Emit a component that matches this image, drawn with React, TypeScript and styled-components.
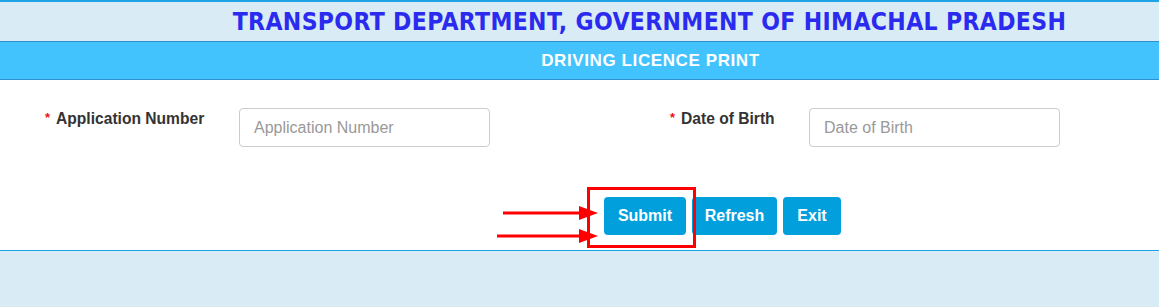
import React from "react";
import styled, { createGlobalStyle } from "styled-components";

const GlobalStyle = createGlobalStyle`
    html, body {
        margin: 0;
        padding: 0;
        background-color: #d9ecf6;
        font-family: "Liberation Sans", Arial, sans-serif;
    }
`;

const PageWrapper = styled.div`
    width: 1159px;
    min-height: 307px;
    background-color: #d9ecf6;
    border-top: 2px solid #1ea3e4;
`;

const Header = styled.div`
    height: 39px;
    display: flex;
    align-items: center;
    justify-content: center;
    padding-left: 140px;
    box-sizing: border-box;
`;

const HeaderTitle = styled.h1`
    margin: 0;
    font-family: "DejaVu Sans Condensed", "DejaVu Sans", sans-serif;
    font-weight: bold;
    font-size: 24.5px;
    letter-spacing: 0.35px;
    color: #2b2bf0;
`;

const TitleBar = styled.div`
    height: 37px;
    background-color: #42c3fe;
    border-top: 1px solid #2e90cf;
    border-bottom: 1px solid #2e90cf;
    display: flex;
    align-items: center;
    justify-content: center;
    padding-left: 142px;
    color: white;
    font-weight: bold;
    font-size: 17px;
    letter-spacing: 0.6px;
`;

const FormBlock = styled.div`
    background-color: white;
    height: 170px;
    border-bottom: 1px solid #1ea3e4;
    position: relative;
`;

const FieldRow = styled.div`
    display: grid;
    grid-template-columns: 194px 251px 180px 139px 251px;
    padding: 28px 0 0 45px;
    align-items: start;
`;

const Label = styled.label`
    font-weight: bold;
    font-size: 15.6px;
    color: #333;
    padding-top: 2px;
`;

const Star = styled.span`
    color: #f01010;
    font-size: 13px;
    margin-right: 6px;
    vertical-align: 2px;
`;

const TextInput = styled.input`
    box-sizing: border-box;
    width: 251px;
    height: 39px;
    border: 1px solid #ccc;
    border-radius: 4px;
    padding: 0 14px;
    font-family: "Liberation Sans", Arial, sans-serif;
    font-size: 16px;
    color: #555;
    &::placeholder {
        color: #999;
    }
`;

const Spacer = styled.div``;

const ButtonRow = styled.div`
    display: flex;
    gap: 6px;
    padding: 50px 0 0 604px;
`;

const Button = styled.button<{ $width: number }>`
    width: ${(p) => p.$width}px;
    height: 38px;
    border: none;
    border-radius: 4px;
    background-color: #019fdc;
    color: white;
    font-family: "Liberation Sans", Arial, sans-serif;
    font-weight: bold;
    font-size: 16px;
    cursor: pointer;
`;

const Highlight = styled.div`
    position: absolute;
    left: 587px;
    top: 107px;
    width: 103px;
    height: 55px;
    border: 3px solid #ff0000;
`;

const Arrow = styled.svg<{ $top: number; $left: number }>`
    position: absolute;
    top: ${(p) => p.$top}px;
    left: ${(p) => p.$left}px;
`;

const Footer = styled.div`
    height: 55px;
`;

const RedArrow = ({ top, left, length }: { top: number; left: number; length: number }) => (
    <Arrow $top={top} $left={left} width={length} height={16} viewBox={`0 0 ${length} 16`}>
        <line x1={0} y1={8} x2={length - 12} y2={8} stroke="#ff0000" strokeWidth={3} />
        <polygon points={`${length - 19},1 ${length},8 ${length - 19},15`} fill="#ff0000" />
    </Arrow>
);

export default function App() {
    return (
        <PageWrapper>
            <GlobalStyle />
            <Header>
                <HeaderTitle>TRANSPORT DEPARTMENT, GOVERNMENT OF HIMACHAL PRADESH</HeaderTitle>
            </Header>
            <TitleBar>DRIVING LICENCE PRINT</TitleBar>
            <FormBlock>
                <FieldRow>
                    <Label><Star>*</Star>Application Number</Label>
                    <TextInput placeholder="Application Number" />
                    <Spacer />
                    <Label><Star>*</Star>Date of Birth</Label>
                    <TextInput placeholder="Date of Birth" />
                </FieldRow>
                <ButtonRow>
                    <Button $width={82}>Submit</Button>
                    <Button $width={85}>Refresh</Button>
                    <Button $width={58}>Exit</Button>
                </ButtonRow>
                <Highlight />
                <RedArrow top={125} left={503} length={95} />
                <RedArrow top={148} left={497} length={101} />
            </FormBlock>
            <Footer />
        </PageWrapper>
    );
}
